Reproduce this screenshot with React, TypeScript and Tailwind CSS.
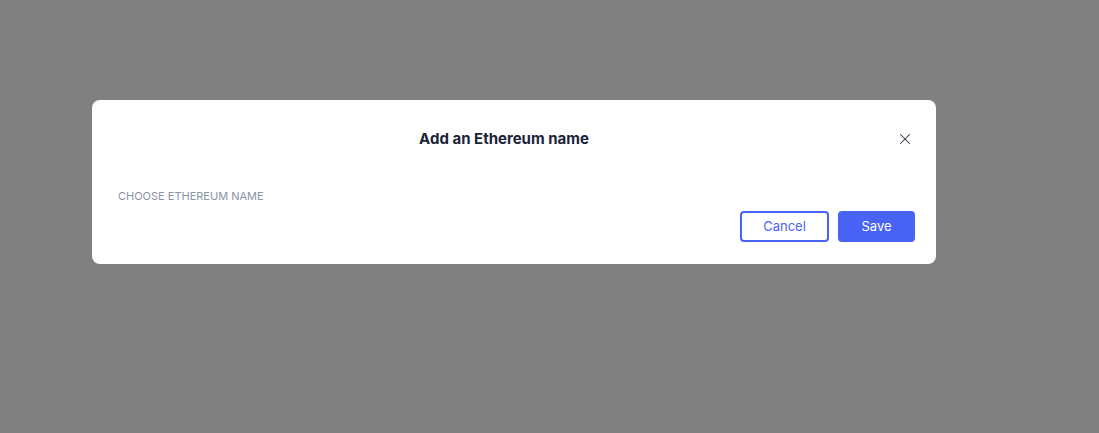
import { X } from "lucide-react";

export default function App() {
  return (
    <div
      className="w-[1099px] h-[433px] bg-[#808080] flex items-start justify-start"
      style={{ fontFamily: "Inter, 'Noto Sans', sans-serif" }}
    >
      {/* Modal */}
      <div className="ml-[92px] mt-[100px] w-[844px] h-[164px] bg-white rounded-[8px] flex flex-col">
        <div className="relative flex items-center justify-center h-[20px] mt-[29px] pr-[20px]">
          <h2 className="text-[15px] leading-[20px] font-bold text-[#1b2439]">Add an Ethereum name</h2>
          <button className="absolute right-[21px] top-0 w-[20px] h-[20px] flex items-center justify-center text-[#2d3548]">
            <X size={18} strokeWidth={1.4} />
          </button>
        </div>
        <div className="pl-[26px] pr-[21px] mt-[40px]">
          <div className="text-[11px] leading-[14px] text-[#8a94a6] uppercase">Choose Ethereum name</div>
          <div className="flex justify-end gap-[9px] mt-[8px]">
            <button className="w-[89px] h-[31px] rounded-[4px] border-2 border-[#4a63f7] text-[#4a63f7] text-[13px]">
              Cancel
            </button>
            <button className="w-[77px] h-[31px] rounded-[4px] bg-[#4a63f7] text-white text-[13px]">
              Save
            </button>
          </div>
        </div>
      </div>
    </div>
  );
}
